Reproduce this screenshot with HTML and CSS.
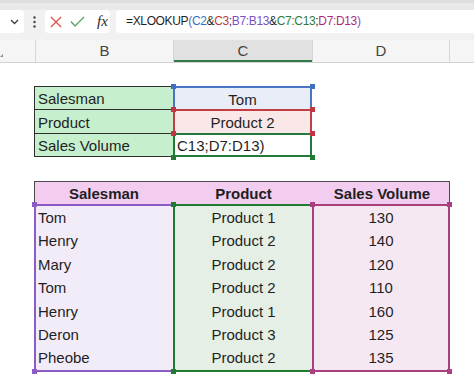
FILE: index.html
```html
<!DOCTYPE html>
<html lang="en">
<head>
    <meta charset="UTF-8">
    <meta name="viewport" content="width=device-width, initial-scale=1.0">
    <title>XLOOKUP con varios criterios</title>
    <link rel="stylesheet" href="styles.css">
</head>
<body>
    <div class="ribbon-edge"></div>

    <div class="formula-bar">
        <div class="name-box">
            <svg width="9" height="6" viewBox="0 0 9 6"><polyline points="1,1 4.5,4.5 8,1" fill="none" stroke="#3c3c3c" stroke-width="1.3"/></svg>
        </div>
        <div class="grip">
            <svg width="3" height="12" viewBox="0 0 3 12"><circle cx="1.5" cy="1.5" r="1.2" fill="#444"/><circle cx="1.5" cy="6" r="1.2" fill="#444"/><circle cx="1.5" cy="10.5" r="1.2" fill="#444"/></svg>
        </div>
        <div class="fx-box">
            <svg class="cancel" width="12" height="12" viewBox="0 0 12 12"><path d="M1 1 L11 11 M11 1 L1 11" stroke="#d9534f" stroke-width="1.4" fill="none"/></svg>
            <svg class="enter" width="15" height="11" viewBox="0 0 15 11"><polyline points="1,5.5 5,10 14,1" fill="none" stroke="#5aa667" stroke-width="1.4"/></svg>
            <span class="fx">fx</span>
        </div>
        <div class="formula">=XLOOKUP<span class="paren">(</span><span class="r-blue">C2</span>&amp;<span class="r-red">C3</span>;<span class="r-purple">B7:B13</span>&amp;<span class="r-green">C7:C13</span>;<span class="r-magenta">D7:D13</span><span class="paren">)</span></div>
    </div>

    <div class="col-heads">
        <div class="corner"><span class="corner-mark"></span></div>
        <div class="col-head col-b">B</div>
        <div class="col-head col-c active">C</div>
        <div class="col-head col-d">D</div>
        <div class="col-head col-rest"></div>
    </div>

    <div class="sheet">
        <!-- criterios de busqueda -->
        <div class="lookup">
            <div class="label">Salesman</div>
            <div class="val val-blue">Tom</div>
            <div class="label">Product</div>
            <div class="val val-red">Product 2</div>
            <div class="label last">Sales Volume</div>
            <div class="val val-green">C13;D7:D13)</div>

            <span class="handle h-blue" style="left: 137px; top: -2px;"></span>
            <span class="handle h-blue" style="left: 276px; top: -2px;"></span>
            <span class="handle h-red" style="left: 137px; top: 21px;"></span>
            <span class="handle h-red" style="left: 276px; top: 21px;"></span>
            <span class="handle h-red" style="left: 137px; top: 45px;"></span>
            <span class="handle h-red" style="left: 276px; top: 45px;"></span>
            <span class="handle h-green" style="left: 137px; top: 69px;"></span>
            <span class="handle h-green" style="left: 276px; top: 69px;"></span>
        </div>

        <!-- tabla de datos -->
        <div class="data">
            <div class="data-head">
                <div>Salesman</div>
                <div>Product</div>
                <div>Sales Volume</div>
            </div>
            <div class="data-body">
                <div class="range range-purple">
                    <div class="cell">Tom</div>
                    <div class="cell">Henry</div>
                    <div class="cell">Mary</div>
                    <div class="cell">Tom</div>
                    <div class="cell">Henry</div>
                    <div class="cell">Deron</div>
                    <div class="cell">Pheobe</div>
                </div>
                <div class="range range-green">
                    <div class="cell">Product 1</div>
                    <div class="cell">Product 2</div>
                    <div class="cell">Product 2</div>
                    <div class="cell">Product 2</div>
                    <div class="cell">Product 1</div>
                    <div class="cell">Product 3</div>
                    <div class="cell">Product 2</div>
                </div>
                <div class="range range-magenta">
                    <div class="cell">130</div>
                    <div class="cell">140</div>
                    <div class="cell">120</div>
                    <div class="cell">110</div>
                    <div class="cell">160</div>
                    <div class="cell">125</div>
                    <div class="cell">135</div>
                </div>

                <span class="handle h-purple" style="left: -2px; top: -2px;"></span>
                <span class="handle h-purple" style="left: -2px; bottom: -2px;"></span>
                <span class="handle h-green" style="left: 137px; top: -2px;"></span>
                <span class="handle h-green" style="left: 137px; bottom: -2px;"></span>
                <span class="handle h-magenta" style="left: 276px; top: -2px;"></span>
                <span class="handle h-magenta" style="left: 276px; bottom: -2px;"></span>
                <span class="handle h-magenta" style="left: 413px; top: -2px;"></span>
                <span class="handle h-magenta" style="left: 413px; bottom: -2px;"></span>
            </div>
        </div>
    </div>
</body>
</html>
```

FILE: styles.css
```css
html, body { margin: 0; padding: 0; }
body {
    width: 474px;
    height: 386px;
    overflow: hidden;
    background: #fff;
    font-family: "Liberation Sans", Arial, sans-serif;
    color: #1f1f1f;
}

/* barra de formulas */
.ribbon-edge { height: 10px; background: #e9e9e9; border-top: 3px solid #dedede; box-sizing: border-box; }
.formula-bar {
    display: flex;
    height: 23px;
    padding-bottom: 7px;
    background: #f1f1f1;
    gap: 0;
}
.name-box {
    width: 24px;
    background: #fff;
    border-radius: 0 4px 4px 0;
    display: flex;
    align-items: center;
    justify-content: flex-end;
    padding-right: 5px;
    box-sizing: border-box;
}
.grip { width: 21px; display: flex; align-items: center; justify-content: center; }
.fx-box {
    width: 65px;
    background: #fff;
    border-radius: 4px;
    display: flex;
    align-items: center;
    padding-left: 5px;
    box-sizing: border-box;
}
.fx-box .cancel { margin-right: 8px; }
.fx-box .enter { margin-right: 12px; }
.fx { font-family: "Liberation Serif", serif; font-style: italic; font-size: 15px; color: #2a2a2a; }
.formula {
    flex: 1;
    margin-left: 6px;
    background: #fff;
    border-radius: 4px 0 0 4px;
    line-height: 23px;
    padding-left: 10px;
    font-size: 12px;
    letter-spacing: -0.35px;
    color: #1f1f1f;
    white-space: nowrap;
}
.paren { color: #5b6fa6; }
.formula .paren:last-child { color: #8a4fb8; }
.r-blue { color: #3c6fc4; }
.r-red { color: #bf3a3a; }
.r-purple { color: #7d4fc0; }
.r-green { color: #2f7d3c; }
.r-magenta { color: #b02a7c; }

/* encabezados de columnas */
.col-heads {
    display: flex;
    height: 22px;
    background: #f5f5f5;
    border-bottom: 1px solid #d3d3d3;
    box-sizing: content-box;
}
.corner { width: 35px; position: relative; }
.corner-mark {
    position: absolute;
    left: 0;
    top: 14px;
    width: 0;
    height: 0;
    border-left: 3px solid transparent;
    border-bottom: 3px solid #8a8a8a;
}
.col-head {
    border-left: 1px solid #d6d6d6;
    text-align: center;
    line-height: 22px;
    font-size: 15px;
    color: #444;
    box-sizing: border-box;
}
.col-b { width: 138px; }
.col-c { width: 139px; }
.col-d { width: 137px; }
.col-rest { flex: 1; }
.col-head.active { background: #e1e1e1; box-shadow: inset 0 -2px 0 #2f7a47; }

/* hoja */
.sheet { padding: 23px 0 0 34px; font-size: 15px; }

.lookup {
    position: relative;
    display: grid;
    grid-template-columns: 139px 139px;
    grid-template-rows: 23px 24px 24px;
    width: 278px;
}
.lookup > div { box-sizing: border-box; display: flex; align-items: center; padding-top: 1px; }
.label {
    background: #c6efce;
    border-top: 1px solid #2e2e2e;
    border-left: 1px solid #2e2e2e;
    padding-left: 3px;
}
.label.last { border-bottom: 1px solid #2e2e2e; }
.val { justify-content: center; border: 2px solid; border-bottom: none; }
.val-blue { background: #e8edf7; border-color: #4a75c4; }
.val-red { background: #fae8e8; border-color: #c23d44; }
.val-green { background: #fff; border-color: #217a3c; border-bottom: 2px solid #217a3c; justify-content: flex-start; padding-left: 2px; }

.handle { position: absolute; width: 5px; height: 5px; }
.h-blue { background: #3f6fc4; }
.h-red { background: #c23644; }
.h-green { background: #1f7a34; }
.h-purple { background: #8a5cc8; }
.h-magenta { background: #aa3f82; }

.data { margin-top: 24px; width: 416px; }
.data-head {
    display: grid;
    grid-template-columns: 139px 139px 138px;
    height: 23px;
    background: #f2cdef;
    border: 1px solid #4a4a4a;
    border-bottom: none;
    box-sizing: border-box;
    font-weight: bold;
}
.data-head div { text-align: center; line-height: 23px; }
.data-head div:first-child { margin-left: -1px; }

.data-body { position: relative; display: flex; }
.range { border: 2px solid; border-right: none; box-sizing: border-box; width: 139px; }
.range-purple { background: #f1ecf8; border-color: #8b5cc6; }
.range-green { background: #e5efe6; border-color: #1f7b30; }
.range-magenta { background: #f6e8f2; border-color: #a8407f; border-right: 2px solid #a8407f; width: 138px; }
.cell { height: 23.4px; line-height: 24px; }
.range-purple .cell { padding-left: 2px; }
.range-green .cell, .range-magenta .cell { text-align: center; }
```
